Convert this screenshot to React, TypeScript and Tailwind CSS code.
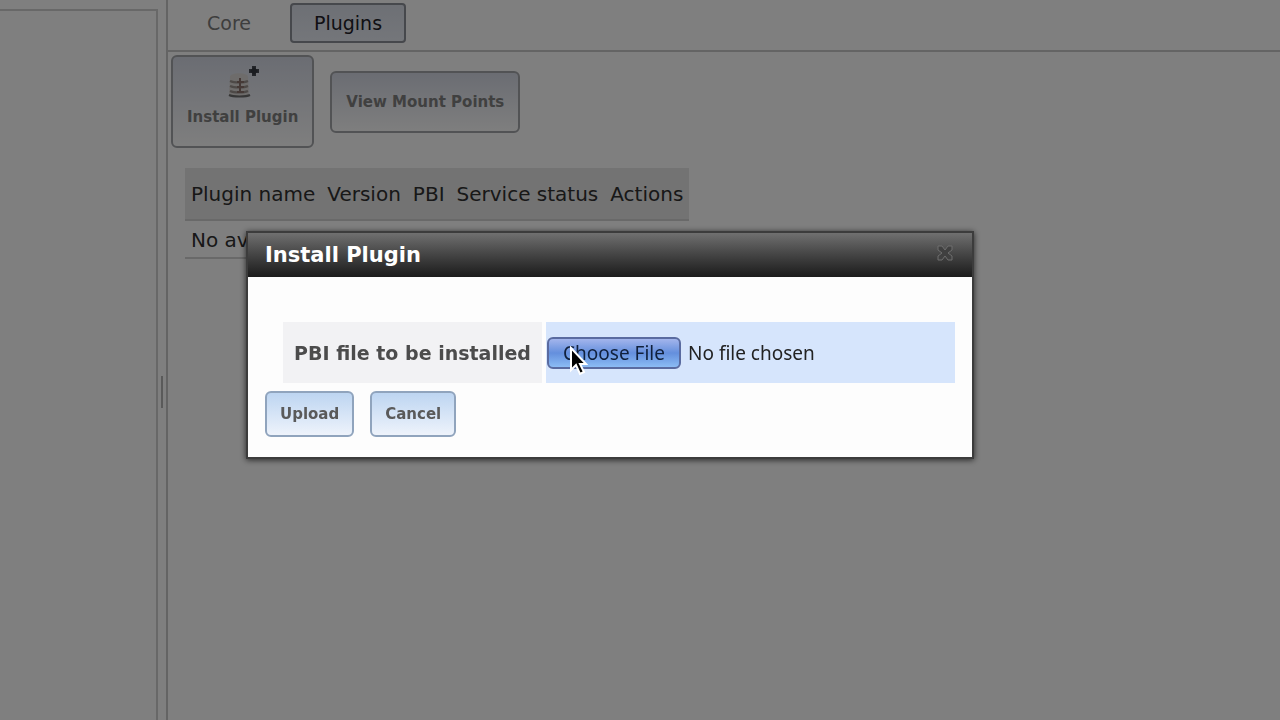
import { useState } from "react";

const TABS = ["Core", "Plugins"];
const COLUMNS = ["Plugin name", "Version", "PBI", "Service status", "Actions"];

const BUTTON = "rounded-md border-2 border-[#90a4bd] bg-linear-to-b from-[#bdd5f1] to-[#eef3fb] font-bold text-[#5a5a5a] text-[15px] leading-5";
const TOOL_BUTTON = "rounded-md border-2 border-[#a4a6aa] bg-linear-to-b from-[#d6dae6] to-[#fdfdfd] font-bold text-[#808080] text-[15px] leading-5";

function PluginIcon() {
    return (
        <svg className="shrink-0" width="34" height="34" viewBox="0 0 34 34" aria-hidden="true">
            <path d="M4 12c0-5 18-5 18 0l1 17c-3 3-17 3-20 0z" fill="#dcd9d7" />
            <path d="M4 16c4 2 14 2 18 0M4 21c4 2 14 2 18 0M4 26c4 2 14 2 18 0" fill="none" stroke="#9a928e" strokeWidth="2" />
            <path d="M3 30c4 2 17 2 21 0" fill="none" stroke="#6c6c6c" strokeWidth="2" />
            <path d="M14 13v15M11 17h7M11 22h7M11 27h7" stroke="#8a736c" strokeWidth="2" />
            <path d="M28 1v10M23 6h10" stroke="#484c54" strokeWidth="4" />
            <path d="M28 2l4 4-4 4-4-4z" fill="#343840" />
        </svg>
    );
}

function Cursor() {
    return (
        <svg className="pointer-events-none absolute left-5 top-6" width="24" height="34" viewBox="0 0 24 34" aria-hidden="true">
            <path d="M5 2v22l5-5 4 9 4-2-4-8h6z" fill="#000" stroke="#fff" strokeWidth="2" />
        </svg>
    );
}

function InstallDialog({ onClose }: { onClose: () => void }) {
    return (
        <div className="fixed inset-0 flex items-start justify-center bg-black/50 pt-[231px] pr-[60px]">
            <div role="dialog" aria-labelledby="dialog-title" className="w-full max-w-[728px] border-2 border-[#3c3c3c] bg-[#fdfdfd] shadow-[0_1px_6px_rgba(0,0,0,0.7)]">
                <div className="flex h-11 items-center justify-between bg-linear-to-b from-[#707070] to-[#1c1c1c] px-[17px]">
                    <h2 id="dialog-title" className="text-[21px] leading-6 font-bold text-white">Install Plugin</h2>
                    <button type="button" aria-label="Close" onClick={onClose} className="mb-1">
                        <svg width="20" height="20" viewBox="0 0 20 20" aria-hidden="true">
                            <path d="M3 3h4l3 4 3-4h4v4l-4 3 4 3v4h-4l-3-4-3 4H3v-4l4-3-4-3z" fill="#404040" stroke="#6e6e6e" strokeWidth="1" />
                        </svg>
                    </button>
                </div>
                <form className="px-[17px] pt-[45px] pb-5" onSubmit={(e) => e.preventDefault()}>
                    <div className="ml-[18px] flex gap-1">
                        <label htmlFor="pbi-file" className="flex h-[61px] w-[259px] items-center justify-center bg-[#f2f2f4] text-[19px] font-bold whitespace-nowrap text-[#4c4c4c]">
                            PBI file to be installed
                        </label>
                        <div className="relative flex h-[61px] flex-1 items-center bg-[#d6e5fc] pl-px">
                            <input
                                id="pbi-file"
                                type="file"
                                className="w-full font-['Noto_Sans',sans-serif] text-[19px] leading-6 text-[#222] file:mr-[7px] file:h-8 file:w-[134px] file:rounded-md file:border-2 file:border-solid file:border-[#5a6ba0] file:bg-linear-to-b file:from-[#a3b5ec] file:via-[#648fdd] file:to-[#8cbcf4] file:text-[#10203c]"
                            />
                            <Cursor />
                        </div>
                    </div>
                    <div className="mt-2 flex gap-4">
                        <button type="submit" className={`${BUTTON} h-[46px] px-[13px]`}>Upload</button>
                        <button type="button" onClick={onClose} className={`${BUTTON} h-[46px] px-[13px]`}>Cancel</button>
                    </div>
                </form>
            </div>
        </div>
    );
}

export default function App() {
    const [tab, setTab] = useState("Plugins");
    const [open, setOpen] = useState(true);

    return (
        <div className="flex min-h-screen bg-white font-['DejaVu_Sans',sans-serif] text-[19px] leading-6 text-[#303030]">
            {/* Navigation tree pane */}
            <aside className="mt-[9px] w-[158px] shrink-0 border-t-2 border-r-2 border-[#d0d0d0]" />
            <div className="flex w-2 shrink-0 items-center justify-center pt-16">
                <div className="h-8 w-0.5 bg-[#b4b4b4]" />
            </div>

            <main className="flex-1 border-l-2 border-[#c8c8c8]">
                <nav className="flex h-[52px] items-start gap-[15px] border-b-2 border-[#c8c8c8] pt-[3px] pl-[15px]">
                    {TABS.map((name) => (
                        <button
                            key={name}
                            type="button"
                            onClick={() => setTab(name)}
                            className={`h-10 rounded-sm border-2 px-[22px] ${
                                tab === name
                                ? "border-[#8c9099] bg-linear-to-b from-[#dbe0ea] to-[#e9edf5] text-[#202028]"
                                : "border-transparent text-[#7c7c7c]"
                            }`}
                        >
                            {name}
                        </button>
                    ))}
                </nav>

                <div className="flex items-center gap-4 pt-[3px] pl-[3px]">
                    <button type="button" onClick={() => setOpen(true)} className={`${TOOL_BUTTON} flex h-[93px] flex-col items-center gap-2 px-3.5 pt-2`}>
                        <PluginIcon />
                        Install Plugin
                    </button>
                    <button type="button" className={`${TOOL_BUTTON} h-[62px] px-3.5`}>View Mount Points</button>
                </div>

                <table className="mt-5 ml-[17px] border-collapse text-[20px]">
                    <thead>
                        <tr className="h-[52px] border-b-2 border-[#d2d2d2] bg-[#e6e6e6]">
                            {COLUMNS.map((column) => (
                                <th key={column} scope="col" className="px-1.5 text-left font-normal">{column}</th>
                            ))}
                        </tr>
                    </thead>
                    <tbody>
                        <tr className="h-[38px] border-b-2 border-[#d2d2d2]">
                            <td colSpan={5} className="px-1.5 pt-0.5">No av</td>
                        </tr>
                    </tbody>
                </table>
            </main>

            {open && <InstallDialog onClose={() => setOpen(false)} />}
        </div>
    );
}
